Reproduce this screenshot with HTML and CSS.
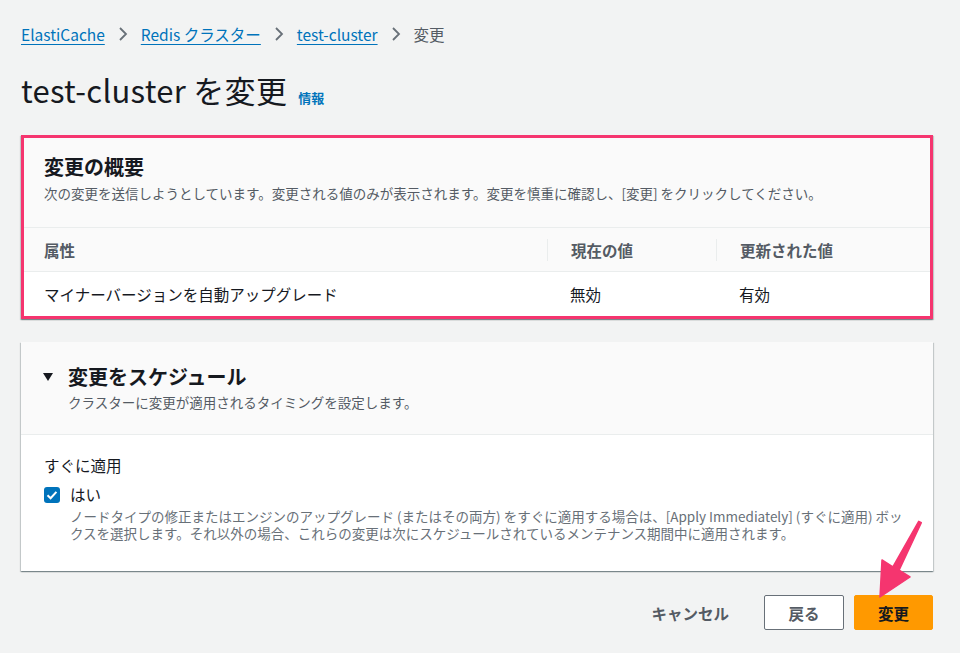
FILE: index.html
```html
<!DOCTYPE html>
<html lang="ja">
<head>
    <meta charset="UTF-8">
    <meta name="viewport" content="width=device-width, initial-scale=1.0">
    <title>test-cluster を変更</title>
    <link rel="stylesheet" href="styles.css">
</head>
<body>
    <div class="page">
        <!-- パンくず -->
        <nav class="breadcrumb">
            <a href="#">ElastiCache</a>
            <svg class="crumb-sep" width="12" height="16" viewBox="0 0 12 16"><path d="M3 2 L9 8 L3 14" fill="none" stroke="#687078" stroke-width="1.8"/></svg>
            <a href="#">Redis クラスター</a>
            <svg class="crumb-sep" width="12" height="16" viewBox="0 0 12 16"><path d="M3 2 L9 8 L3 14" fill="none" stroke="#687078" stroke-width="1.8"/></svg>
            <a href="#">test-cluster</a>
            <svg class="crumb-sep" width="12" height="16" viewBox="0 0 12 16"><path d="M3 2 L9 8 L3 14" fill="none" stroke="#687078" stroke-width="1.8"/></svg>
            <span class="crumb-current">変更</span>
        </nav>

        <h1 class="page-title"><span>test-cluster を変更</span><a href="#" class="info">情報</a></h1>

        <!-- 変更の概要 -->
        <section class="panel summary">
            <div class="panel-head">
                <h2>変更の概要</h2>
                <p>次の変更を送信しようとしています。変更される値のみが表示されます。変更を慎重に確認し、[変更] をクリックしてください。</p>
            </div>
            <div class="diff-table">
                <div class="diff-row diff-head">
                    <div class="cell">属性</div>
                    <div class="cell">現在の値</div>
                    <div class="cell">更新された値</div>
                </div>
                <div class="diff-row">
                    <div class="cell">マイナーバージョンを自動アップグレード</div>
                    <div class="cell">無効</div>
                    <div class="cell">有効</div>
                </div>
            </div>
        </section>

        <!-- 変更をスケジュール -->
        <section class="panel schedule">
            <div class="panel-head">
                <h2>
                    <svg class="caret" width="10" height="8" viewBox="0 0 10 8"><path d="M0 0 H10 L5 8 Z" fill="#16191f"/></svg>
                    変更をスケジュール
                </h2>
                <p>クラスターに変更が適用されるタイミングを設定します。</p>
            </div>
            <div class="panel-body">
                <div class="field-label">すぐに適用</div>
                <div class="check-row">
                    <span class="checkbox">
                        <svg width="16" height="16" viewBox="0 0 16 16"><path d="M3.5 8.2 L6.6 11.2 L12.4 4.8" fill="none" stroke="#fff" stroke-width="2"/></svg>
                    </span>
                    <div class="check-text">
                        <div class="check-label">はい</div>
                        <p class="check-desc">ノードタイプの修正またはエンジンのアップグレード (またはその両方) をすぐに適用する場合は、[Apply Immediately] (すぐに適用) ボックスを選択します。それ以外の場合、これらの変更は次にスケジュールされているメンテナンス期間中に適用されます。</p>
                    </div>
                </div>
            </div>
        </section>

        <div class="actions">
            <button class="btn btn-link">キャンセル</button>
            <button class="btn btn-normal">戻る</button>
            <button class="btn btn-primary">変更</button>
        </div>

        <!-- 変更ボタンを指す矢印 -->
        <svg class="pointer" width="80" height="100" viewBox="0 0 80 100">
            <polygon points="58.7,16.3 61.3,17.7 39.1,65.1 50,72 20,92 22,55 32.9,61.9" fill="#f5356f" stroke="#f5356f" stroke-width="1.5" stroke-linejoin="round"/>
        </svg>
    </div>
</body>
</html>
```

FILE: styles.css
```css
*{
    margin: 0;
    padding: 0;
    box-sizing: border-box;
}
body{
    background-color: #f2f3f3;
    font-family: "Noto Sans CJK JP", "Noto Sans", sans-serif;
    font-size: 15.5px;
    color: #16191f;
}
a{
    color: #0073bb;
}
.page{
    position: relative;
    padding: 23px 27px 0 21px;
}

/* パンくず */
.breadcrumb{
    display: flex;
    align-items: center;
    gap: 12px;
    height: 22px;
    line-height: 22px;
}
.breadcrumb a{
    text-decoration: underline;
    text-underline-offset: 3px;
}
.crumb-current{
    color: #545b64;
}

.page-title{
    display: flex;
    align-items: baseline;
    gap: 11px;
    height: 36px;
    margin-top: 27px;
    font-size: 31px;
    font-weight: 400;
    line-height: 36px;
}
.page-title span{
    letter-spacing: 0.3px;
}
.page-title .info{
    font-size: 13px;
    font-weight: 700;
    line-height: 1;
    text-decoration: none;
}

/* パネル */
.panel{
    background-color: #fff;
    box-shadow: 0 1px 1px 0 rgba(0,28,36,.3), 1px 1px 1px 0 rgba(0,28,36,.15), -1px 1px 1px 0 rgba(0,28,36,.15);
}
.panel-head{
    background-color: #fafafa;
    border-bottom: 1px solid #eaeded;
}
.panel-head h2{
    font-size: 20px;
    font-weight: 700;
    line-height: 26px;
}
.panel-head p{
    font-size: 13.5px;
    line-height: 18px;
    color: #545b64;
}

.summary{
    margin-top: 27px;
    border: 3px solid #f5356f;
}
.summary .panel-head{
    padding: 16px 20px 25px;
}
.summary .panel-head p{
    margin-top: 4px;
}

.diff-row{
    display: grid;
    grid-template-columns: 523px 169px 1fr;
    align-items: center;
    height: 44px;
}
.diff-head{
    height: 44px;
    background-color: #fafafa;
    border-bottom: 1px solid #eaeded;
    color: #545b64;
    font-weight: 700;
}
.cell{
    padding-left: 20px;
}
.diff-row .cell + .cell{
    padding-left: 23px;
}
.diff-head .cell + .cell{
    border-left: 1px solid #eaeded;
    line-height: 22px;
}

.schedule{
    margin-top: 23px;
}
.schedule .panel-head{
    padding: 22px 20px 23px 22px;
}
.schedule .panel-head h2{
    display: flex;
    align-items: center;
    gap: 15px;
}
.schedule .panel-head p{
    margin: 3px 0 0 25px;
}
.panel-body{
    padding: 19px 20px 29px 23px;
}
.field-label{
    line-height: 22px;
}
.check-row{
    display: flex;
    gap: 10px;
    margin-top: 7px;
}
.checkbox{
    flex: none;
    width: 16px;
    height: 16px;
    margin-top: 4px;
    background-color: #0073bb;
    border-radius: 3px;
}
.checkbox svg{
    display: block;
}
.check-label{
    line-height: 22px;
}
.check-desc{
    margin-top: 3px;
    font-size: 13.5px;
    line-height: 17px;
    color: #687078;
}

/* ボタン */
.actions{
    display: flex;
    justify-content: flex-end;
    align-items: center;
    gap: 10px;
    margin-top: 24px;
}
.btn{
    height: 35px;
    font-family: inherit;
    font-size: 15.5px;
    font-weight: 700;
    border-radius: 2px;
    cursor: pointer;
}
.btn-link{
    border: none;
    background: none;
    color: #545b64;
    padding: 0 15px;
    margin-right: 10px;
}
.btn-normal{
    width: 80px;
    background-color: #fff;
    border: 1px solid #687078;
    color: #545b64;
}
.btn-primary{
    width: 79px;
    background-color: #ff9900;
    border: 1px solid #ff9900;
    color: #16191f;
}

.pointer{
    position: absolute;
    left: 860px;
    top: 505px;
}
```
